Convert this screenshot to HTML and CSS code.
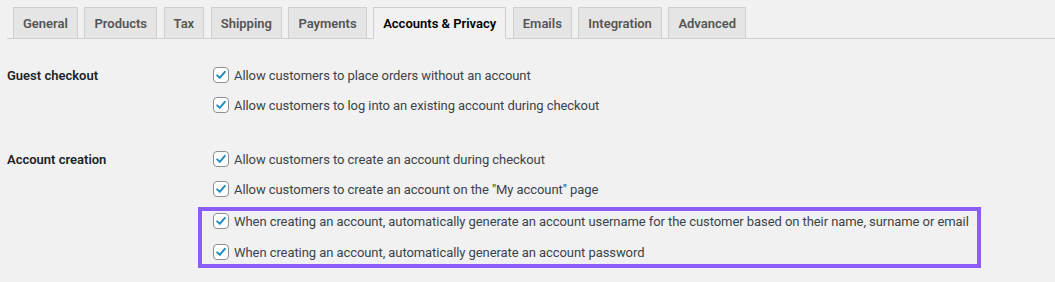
FILE: index.html
```html
<!DOCTYPE html>
<html>
<head>
<meta charset="utf-8">
<link rel="stylesheet" href="styles.css">
</head>
<body>
<nav class="tabs">
  <a class="tab">General</a>
  <a class="tab">Products</a>
  <a class="tab">Tax</a>
  <a class="tab">Shipping</a>
  <a class="tab">Payments</a>
  <a class="tab active">Accounts &amp; Privacy</a>
  <a class="tab">Emails</a>
  <a class="tab">Integration</a>
  <a class="tab">Advanced</a>
</nav>

<section class="setting first">
  <div class="label">Guest checkout</div>
  <div class="options">
    <label class="opt"><span class="cb"><svg viewBox="0 0 16 16"><path d="M3.6 8.4 L6.6 11.3 L12.4 4.4"/></svg></span>Allow customers to place orders without an account</label>
    <label class="opt"><span class="cb"><svg viewBox="0 0 16 16"><path d="M3.6 8.4 L6.6 11.3 L12.4 4.4"/></svg></span>Allow customers to log into an existing account during checkout</label>
  </div>
</section>

<section class="setting second">
  <div class="label">Account creation</div>
  <div class="options">
    <label class="opt"><span class="cb"><svg viewBox="0 0 16 16"><path d="M3.6 8.4 L6.6 11.3 L12.4 4.4"/></svg></span>Allow customers to create an account during checkout</label>
    <label class="opt"><span class="cb"><svg viewBox="0 0 16 16"><path d="M3.6 8.4 L6.6 11.3 L12.4 4.4"/></svg></span>Allow customers to create an account on the "My account" page</label>
    <div class="highlight">
      <label class="opt tight"><span class="cb"><svg viewBox="0 0 16 16"><path d="M3.6 8.4 L6.6 11.3 L12.4 4.4"/></svg></span>When creating an account, automatically generate an account username for the customer based on their name, surname or email</label>
      <label class="opt tight"><span class="cb"><svg viewBox="0 0 16 16"><path d="M3.6 8.4 L6.6 11.3 L12.4 4.4"/></svg></span>When creating an account, automatically generate an account password</label>
    </div>
  </div>
</section>
</body>
</html>
```

FILE: styles.css
```css
html, body {
  margin: 0;
  padding: 0;
  background: #f1f1f1;
  font-family: Roboto, "Liberation Sans", sans-serif;
  font-size: 13px;
  color: #3c434a;
}

.tabs {
  display: flex;
  gap: 6.5px;
  margin: 7px 0 0 7px;
  padding-left: 6px;
  border-bottom: 1px solid #cfcfcf;
  height: 31px;
}

.tab {
  box-sizing: border-box;
  height: 32px;
  padding: 0 9px;
  display: flex;
  align-items: center;
  background: #e5e5e5;
  border: 1px solid #cfcfcf;
  color: #555;
  font-weight: 600;
  font-size: 13px;
}

.tab.active {
  background: #f1f1f1;
  border-bottom-color: #f1f1f1;
  color: #000;
}

.setting {
  display: flex;
  margin-left: 7px;
}

.setting.first { margin-top: 21px; }
.setting.second { margin-top: 24px; }

.label {
  width: 206px;
  flex: none;
  height: 30px;
  display: flex;
  align-items: center;
  font-weight: 600;
  color: #1d2327;
}

.options {
  display: flex;
  flex-direction: column;
  align-items: flex-start;
}

.opt {
  height: 30px;
  display: flex;
  align-items: center;
  gap: 5px;
  white-space: nowrap;
  letter-spacing: -0.07px;
}

.opt.tight { height: 20px; }

.cb {
  box-sizing: border-box;
  width: 16px;
  height: 16px;
  border: 1px solid #8c8f94;
  border-radius: 4px;
  background: #fff;
  display: flex;
  flex: none;
}

.cb svg {
  width: 14px;
  height: 14px;
  fill: none;
  stroke: #1e8cbe;
  stroke-width: 2.2;
  stroke-linecap: round;
  stroke-linejoin: round;
}

.highlight {
  margin: 3px 0 0 -15px;
  border: 4px solid #8b5cf6;
  padding: 0 8px 2px 11px;
  display: flex;
  flex-direction: column;
  gap: 11px;
}
```
